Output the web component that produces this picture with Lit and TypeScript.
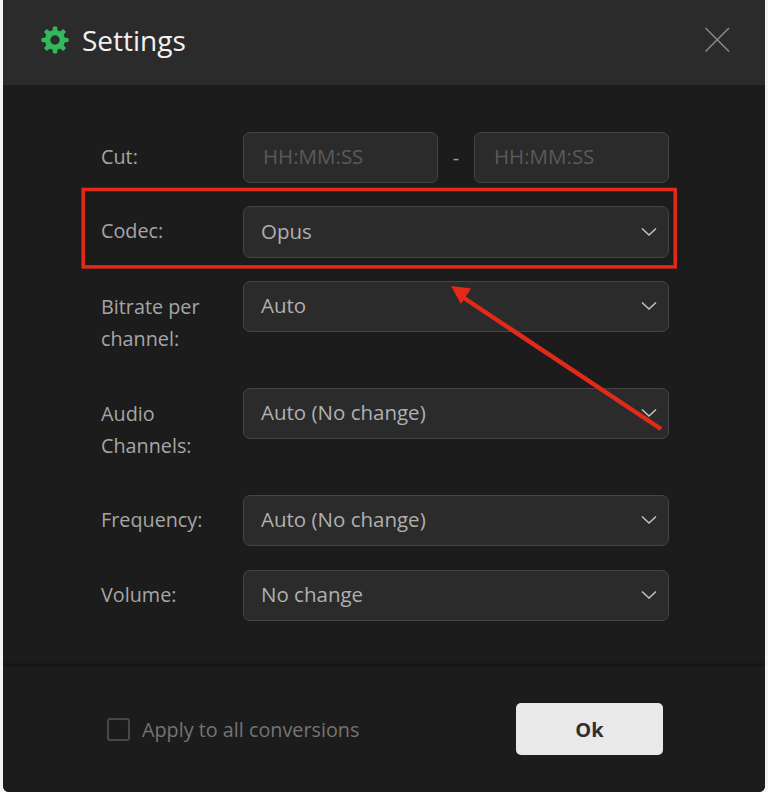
import { LitElement, html, css, svg } from "lit";
import { customElement } from "lit/decorators.js";

const chevron = html`<svg class="chev" width="16" height="10" viewBox="0 0 16 10"><path d="M1 1.5 L8 8 L15 1.5" fill="none" stroke="#c4c4c4" stroke-width="1.5"/></svg>`;

@customElement("app-root")
export class AppRoot extends LitElement {
  static styles = css`
    :host { display: block; width: 768px; height: 792px; position: relative; overflow: hidden; background: #f4f4f4; font-family: "Open Sans", "Noto Sans", sans-serif; }
    .dialog { width: 762px; height: 792px; margin-left: 3px; display: flex; flex-direction: column; background: #1c1c1c; border-radius: 0 0 6px 6px; overflow: hidden; }
    .header { height: 85px; flex: none; background: #2b2b2b; display: flex; align-items: center; padding: 0 35px 6px 38px; box-sizing: border-box; }
    .gear { flex: none; margin-right: 13px; }
    .title { flex: 1; color: #f2f2f2; font-size: 28px; line-height: 32px; }
    .close { flex: none; display: block; }
    .body { flex: 1; padding: 46.7px 96px 0 98px; display: flex; flex-direction: column; }
    .row { display: flex; align-items: flex-start; height: 51.5px; margin-bottom: 23px; }
    .row.tall { height: 83px; margin-bottom: 24px; }
    .row.wide { margin-bottom: 23.5px; }
    .label { width: 142px; flex: none; color: #a6a6a6; font-size: 19.8px; line-height: 32px; padding: 9.3px 20px 0 0; box-sizing: border-box; }
    .row.tall .label { padding-top: 10px; }
    .field { box-sizing: border-box; height: 51.5px; background: #2b2b2b; border: 1.5px solid #444; border-radius: 7px; display: flex; align-items: center; font-size: 20.5px; color: #b0b0b0; padding-bottom: 2px; }
    .select { width: 426px; padding-left: 17px; padding-right: 11px; justify-content: space-between; }
    .chev { margin-top: 2px; }
    .input { width: 195px; padding-left: 19px; padding-right: 18px; color: #5a5a5a; padding-bottom: 3px; }
    .dash { width: 36px; text-align: center; color: #9a9a9a; font-size: 20px; line-height: 51px; }
    .footer { height: 126px; flex: none; background: #1c1c1c; box-shadow: 0 -2px 4px rgba(0,0,0,.35); display: flex; align-items: center; padding: 0 102px 0 104px; box-sizing: border-box; }
    .check { width: 23px; height: 23px; box-sizing: border-box; border: 2px solid #484848; border-radius: 3px; margin-right: 12px; flex: none; }
    .apply { flex: 1; color: #747474; font-size: 19.8px; }
    .ok { width: 147px; height: 52px; background: #e9e9e9; border-radius: 5px; display: flex; align-items: center; justify-content: center; color: #303030; font-size: 20px; font-weight: 700; }
    .overlay { position: absolute; left: 0; top: 0; pointer-events: none; }
  `;

  render() {
    const select = (label: string, value: string, cls = "") => html`
      <div class="row ${cls}">
        <div class="label">${label}</div>
        <div class="field select"><span>${value}</span>${chevron}</div>
      </div>`;
    return html`
      <div class="dialog">
        <div class="header">
          <svg class="gear" width="28" height="28" viewBox="0 0 28 28">
            <g fill="#35b85c">
              ${[0, 45, 90, 135, 180, 225, 270, 315].map(
                (a) => svg`<path d="M11.2 8 L11.9 1.2 Q12 0.4 12.8 0.4 L15.2 0.4 Q16 0.4 16.1 1.2 L16.8 8 Z" transform="rotate(${a} 14 14)"/>`
              )}
            </g>
            <circle cx="14" cy="14" r="7.4" fill="none" stroke="#35b85c" stroke-width="5.4"/>
          </svg>
          <div class="title">Settings</div>
          <svg class="close" width="26" height="26" viewBox="0 0 26 26"><path d="M1.5 1 L25 24.5 M25 1 L1.5 24.5" stroke="#8a8a8a" stroke-width="1.5" fill="none"/></svg>
        </div>
        <div class="body">
          <div class="row">
            <div class="label">Cut:</div>
            <div class="field input">HH:MM:SS</div>
            <div class="dash">-</div>
            <div class="field input">HH:MM:SS</div>
          </div>
          ${select("Codec:", "Opus")}
          ${select("Bitrate per channel:", "Auto", "tall")}
          ${select("Audio Channels:", "Auto (No change)", "tall")}
          ${select("Frequency:", "Auto (No change)", "wide")}
          ${select("Volume:", "No change")}
        </div>
        <div class="footer">
          <div class="check"></div>
          <div class="apply">Apply to all conversions</div>
          <div class="ok">Ok</div>
        </div>
      </div>
      <svg class="overlay" width="768" height="792" viewBox="0 0 768 792">
        <rect x="83.2" y="189.5" width="592" height="77.4" fill="none" stroke="#e32a1a" stroke-width="3.5"/>
        <path d="M661 429 L461 296" stroke="#e32a1a" stroke-width="4.5" fill="none"/>
        <path d="M451 286 L471 288.5 L461 304 Z" fill="#e32a1a"/>
      </svg>
    `;
  }
}
